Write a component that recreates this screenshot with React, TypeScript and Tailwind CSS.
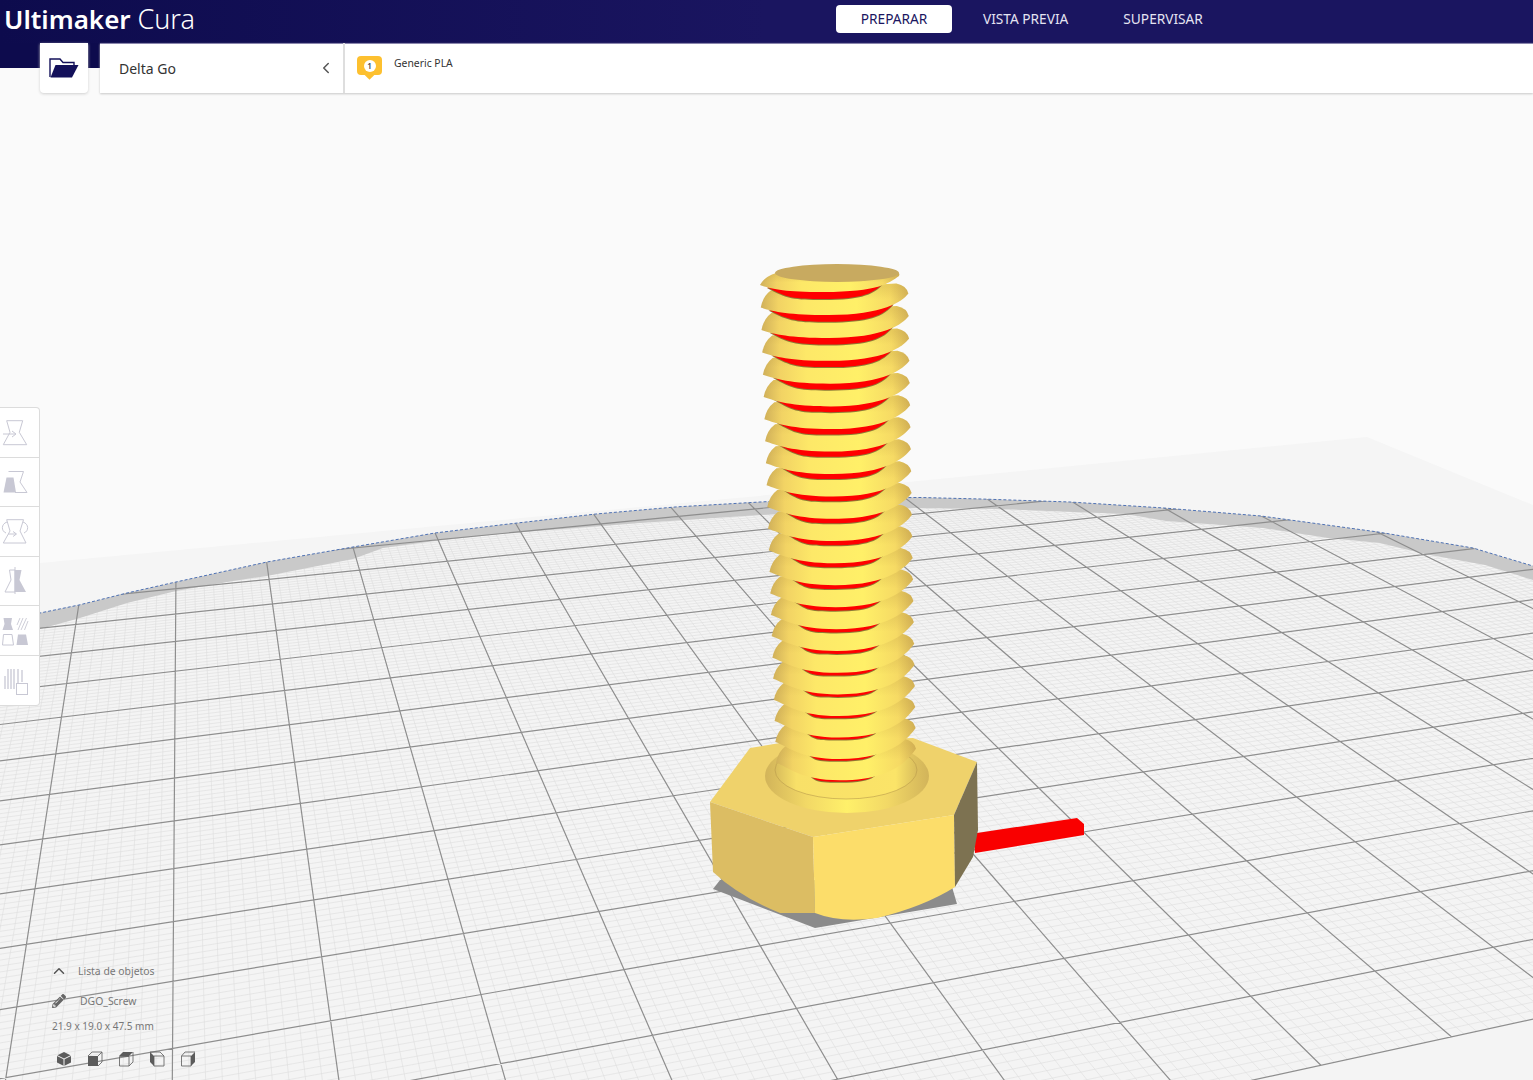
import { ChevronLeft, ChevronUp } from "lucide-react";
import { FaPencilAlt } from "react-icons/fa";

type Pt = [number, number];

// fits the build plate perspective from 4 grid crossings read off the screenshot
function fitPlate(src: Pt[], dst: Pt[]) {
  const a: number[][] = [];
  src.forEach(([u, v], i) => {
    const [x, y] = dst[i];
    a.push([u, v, 1, 0, 0, 0, -u * x, -v * x, x]);
    a.push([0, 0, 0, u, v, 1, -u * y, -v * y, y]);
  });
  for (let c = 0; c < 8; c++) {
    let p = c;
    for (let r = c + 1; r < 8; r++) if (Math.abs(a[r][c]) > Math.abs(a[p][c])) p = r;
    [a[c], a[p]] = [a[p], a[c]];
    for (let r = 0; r < 8; r++) {
      if (r === c) continue;
      const f = a[r][c] / a[c][c];
      for (let k = c; k < 9; k++) a[r][k] -= f * a[c][k];
    }
  }
  const h = a.map((row, i) => row[8] / row[i]);
  return (u: number, v: number): Pt => {
    const w = h[6] * u + h[7] * v + 1;
    return [(h[0] * u + h[1] * v + h[2]) / w, (h[3] * u + h[4] * v + h[5]) / w];
  };
}

const project = fitPlate(
  [[0, 0], [0, 5], [9, 0], [9, 4]],
  [[175.7, 614], [174.5, 778], [950.5, 532.7], [1073.6, 626.7]]
);

const seg = (u1: number, v1: number, u2: number, v2: number) => {
  const a = project(u1, v1);
  const b = project(u2, v2);
  return `M${a[0].toFixed(1)} ${a[1].toFixed(1)}L${b[0].toFixed(1)} ${b[1].toFixed(1)}`;
};

const U0 = -8, U1 = 24, V0 = -3, V1 = 13;
let minor = "";
let major = "";
for (let i = U0 * 10; i <= U1 * 10; i++) {
  if (i % 10 === 0) major += seg(i / 10, V0, i / 10, V1);
  else minor += seg(i / 10, V0, i / 10, V1);
}
for (let i = V0 * 10; i <= V1 * 10; i++) {
  if (i % 10 === 0) major += seg(U0, i / 10, U1, i / 10);
  else minor += seg(U0, i / 10, U1, i / 10);
}

const edge: Pt[] = [
  [0, 625], [40, 613], [79, 605], [127, 593], [176, 582], [267, 562], [353, 547], [435, 533],
  [500, 525], [596, 514], [675, 507], [760, 502], [840, 498], [920, 497.5], [981, 499],
  [1070, 502], [1164, 508], [1261, 516], [1378, 532], [1473, 548], [1533, 566],
];
const bandLower: Pt[] = [
  [1533, 580], [1485, 565], [1425, 554], [1380, 543], [1328, 538], [1263, 528], [1166, 521], [1126, 514],
  [997, 509], [908, 508], [760, 515], [640, 523], [500, 534], [435, 541], [383, 548], [353, 559],
  [267, 576], [233, 581], [176, 591], [127, 603], [80, 618], [40, 629], [0, 640],
];
const pts = (l: Pt[]) => l.map((p) => p.join(",")).join(" ");

const threads = Array.from({ length: 23 }, (_, i) => {
  const t = i / 22;
  const yl = 285 + 22.6 * i - 0.04 * i * i;
  const xl = 760 + 16 * t;
  const xr = i === 0 ? 899 : 908 + 8 * t;
  return {
    i, yl, xl, xr,
    xc: (xl + xr) / 2 - 6,
    sag: 7 + 10.5 * t,
    th: 7 - 5.5 * t,
    s: 7 + 15 * t,
    e: 14 + 15 * t,
  };
}).reverse();

function Screw() {
  return (
    <g>
      <polygon points="720,880 713,889 815,928 957,904 950,880" fill="#8b8b8b" />
      <polygon points="974,843 977,833 1077,818 1084,824 1084,835 975,853" fill="#f90000" />
      <polygon points="710,802 750,748 780,743 913,738 977,762 954,815 813,837" fill="#efd26b" />
      <path d="M710 802L813 837L815 913L780 913Q740 897 713 872Z" fill="#dcbd63" />
      <path d="M813 837L954 815L955 887Q923 907 877 918Q840 923 815 913Z" fill="#fcdd6a" />
      <path d="M954 815L977 762L978 830L973 857L955 887Z" fill="#7d7251" />
      <ellipse cx="847" cy="776" rx="82" ry="37" fill="url(#ring)" />
      <ellipse cx="846" cy="770" rx="71" ry="29" fill="url(#ring2)" stroke="#b89b4c" strokeWidth="0.6" />
      {threads.map(({ i, yl, xl, xr, xc, sag, th, s, e }) => {
        const low = yl + sag + th;
        const red =
          `M${xl + s} ${yl + 2}C${xl + s + 20} ${low - 1} ${xc - 30} ${low} ${xc} ${low}` +
          `C${xc + 40} ${low} ${xr - e - 10} ${yl + 2 + th * 0.5 + sag * 0.4} ${xr - e} ${yl - 4}L${xc} ${yl}Z`;
        const top =
          i === 0
            ? `M${xl} ${yl}Q${xl + 4} ${yl - 8} 776 273L898 273Q${xr + 1} ${yl - 12} ${xr} ${yl - 9}C${xr - 10} ${yl - 2}`
            : `M${xl} ${yl}Q${xl + 2} ${yl - 11} ${xl + 10} ${yl - 17}L${xr - 12} ${yl - 24}Q${xr - 2} ${yl - 22} ${xr} ${yl - 14}C${xr - 6} ${yl - 6}`;
        const lens = `${top} ${xc + 55} ${yl + sag} ${xc} ${yl + sag}C${xc - 40} ${yl + sag} ${xl + 12} ${yl + 4} ${xl} ${yl}Z`;
        return (
          <g key={i}>
            <path d={red} fill="#8f7a36" transform="translate(0 1)" />
            <path d={red} fill="#ff0000" />
            <path d={lens} fill="url(#thread)" />
            <path d={lens} fill="url(#threadShade)" />
          </g>
        );
      })}
      <ellipse cx="837" cy="273" rx="62" ry="9" fill="#c8aa60" />
    </g>
  );
}

function Viewport() {
  return (
    <svg className="absolute inset-0" width="1533" height="1080" viewBox="0 0 1533 1080">
      <defs>
        <linearGradient id="thread" x1="0" x2="1" y1="0" y2="0">
          <stop offset="0" stopColor="#d0b05a" />
          <stop offset="0.12" stopColor="#f2d364" />
          <stop offset="0.3" stopColor="#fde868" />
          <stop offset="0.65" stopColor="#fff068" />
          <stop offset="0.88" stopColor="#f6da64" />
          <stop offset="1" stopColor="#d6b458" />
        </linearGradient>
        <linearGradient id="threadShade" x1="0" x2="0" y1="0" y2="1">
          <stop offset="0.1" stopColor="#b08c3c" stopOpacity="0.2" />
          <stop offset="0.5" stopColor="#b08c3c" stopOpacity="0" />
        </linearGradient>
        <linearGradient id="ring" x1="0" x2="1" y1="0" y2="0">
          <stop offset="0" stopColor="#d2b45a" />
          <stop offset="0.25" stopColor="#f2d866" />
          <stop offset="0.5" stopColor="#fff06a" />
          <stop offset="0.75" stopColor="#f2d866" />
          <stop offset="1" stopColor="#d2b45a" />
        </linearGradient>
        <linearGradient id="ring2" x1="0" x2="1" y1="0" y2="0">
          <stop offset="0" stopColor="#d8bc5c" />
          <stop offset="0.15" stopColor="#f8e068" />
          <stop offset="0.85" stopColor="#fbe468" />
          <stop offset="1" stopColor="#d8bc5c" />
        </linearGradient>
        <clipPath id="bed">
          <polygon points={`${pts(edge)} 1533,1080 0,1080`} />
        </clipPath>
      </defs>
      <polygon points="40,563 908,482 1367,437 1533,505 1533,600 0,640 0,567" fill="#f5f5f5" />
      <polygon points={`${pts(edge)} 1533,1080 0,1080`} fill="#f4f4f4" />
      <path d={minor} clipPath="url(#bed)" fill="none" stroke="#dedede" strokeWidth="0.6" />
      <polygon points={`${pts(edge)} ${pts(bandLower)}`} fill="#c9c9c9" />
      <path d={major} clipPath="url(#bed)" fill="none" stroke="#8e8e8e" strokeWidth="1.2" />
      <polyline points={pts(edge)} fill="none" stroke="#4f72b4" strokeWidth="1" strokeDasharray="3 2" />
      <Screw />
    </svg>
  );
}

const ink = "#c8c8d4";
const tools = [
  <>
    <path d="M6.7 12.7H22.7L19.3 24.3L26.7 36.7H3.3L10 24.3Z" fill="none" stroke={ink} />
    <path d="M3 26H15M12 23L16 26L12 29" fill="none" stroke={ink} />
  </>,
  <>
    <path d="M8.500 14.500H23.500L20 25L27 35.500H15" fill="none" stroke={ink} />
    <path d="M6.500 20.500H13.500L16 35.500H3.500Z" fill={ink} />
  </>,
  <>
    <path d="M6.700 12.700H23.500L20 24L26 36H3.300L10 24Z" fill="none" stroke={ink} />
    <path d="M7 15C1 17 1 24 6 26M23 15C29 17 29 24 24 26" fill="none" stroke={ink} />
    <path d="M8 27H16M13 24.500L16.500 27L13 29.500" fill="none" stroke={ink} />
  </>,
  <>
    <path d="M15 14H9.500L11 24L5 36H15Z" fill="none" stroke={ink} />
    <path d="M15 14H21.500L19.500 24L26 36H15Z" fill={ink} />
    <path d="M15 11V38" stroke={ink} />
  </>,
  <>
    <path d="M3.500 12H12L11 18L13 24H2.500L4.500 18Z" fill={ink} />
    <path d="M18 24L23 12M21 24L26.500 12M24.500 24L28 15M17 19L20 12" stroke={ink} fill="none" strokeWidth="0.9" />
    <path d="M3.500 28.500H12L13.500 39H2.500Z" fill="none" stroke={ink} />
    <path d="M18 28.500H26L28 39H16.500Z" fill={ink} />
  </>,
  <>
    <path d="M5 33V20M8 33V13M11 33V13M14 33V13M18 28V13M22 26V14" stroke={ink} strokeWidth="1.300" fill="none" />
    <rect x="16.500" y="27.500" width="11" height="11" fill="#fff" stroke={ink} />
  </>,
];

const cubeStroke = "#5c5c5c";
function Cube({ kind }: { kind: number }) {
  return (
    <svg width="16" height="16" viewBox="0 0 16 16" className="shrink-0">
      {kind === 0 && (
        <>
          <path d="M8 1L15 4.500V11.500L8 15L1 11.500V4.500Z" fill={cubeStroke} />
          <path d="M1 4.500L8 8L15 4.500M8 8V15" stroke="#f4f4f4" fill="none" />
        </>
      )}
      {kind === 1 && (
        <>
          <path d="M1 5L5 1H15V11L11 15M11 5L15 1" stroke={cubeStroke} strokeWidth="0.8" fill="none" />
          <rect x="1" y="5" width="10" height="10" fill={cubeStroke} />
        </>
      )}
      {kind === 2 && (
        <>
          <path d="M1 5L5 1H15L11 5Z" fill={cubeStroke} />
          <path d="M1.500 5.500H11V15H1.500ZM11 15L15 11V1" stroke={cubeStroke} strokeWidth="0.8" fill="none" />
        </>
      )}
      {kind === 3 && (
        <>
          <path d="M1 1L5 5V15L1 11Z" fill={cubeStroke} />
          <path d="M1 1H11L15 5V15H5V5H15" stroke={cubeStroke} strokeWidth="0.8" fill="none" />
        </>
      )}
      {kind === 4 && (
        <>
          <path d="M11 5L15 1V11L11 15Z" fill={cubeStroke} />
          <path d="M1.500 5H11V15H1.500ZM1.500 5L5 1H15" stroke={cubeStroke} strokeWidth="0.8" fill="none" />
        </>
      )}
    </svg>
  );
}

export default function App() {
  return (
    <div className="relative w-[1533px] h-[1080px] overflow-hidden bg-[#fafafa] font-['Noto_Sans',sans-serif]">
      <Viewport />

      <div className="relative h-[68px] bg-[#0d0b4d]">
        <header className="flex h-[43px] items-start bg-[linear-gradient(to_right,#0d0b4d,#1a1560_50%,#1a1560)] pl-1 pt-[5px]">
          <div className="w-[832px] text-[26px] leading-none text-white">
            <span className="font-semibold">Ultimaker</span> <span className="text-[27px] font-light">Cura</span>
          </div>
          <nav className="flex gap-[7px] text-[13.7px]">
            <a className="flex h-7 w-[116px] items-center justify-center rounded-sm bg-white text-[#1a1560]">PREPARAR</a>
            <a className="flex h-7 items-center px-6 text-[#e4e4f2]">VISTA PREVIA</a>
            <a className="flex h-7 items-center px-6 text-[#e4e4f2]">SUPERVISAR</a>
          </nav>
        </header>

        <div className="flex h-[50px] gap-3 pl-10">
          <button className="flex w-12 items-center justify-center rounded-b-sm bg-white shadow-[0_1px_3px_#d0d0d0]">
            <svg width="30" height="22" viewBox="0 0 30 22">
              <path d="M1 20V2H11L14 5.500H25V8" fill="none" stroke="#13105a" strokeWidth="1.400" />
              <path d="M6.500 8H29.500L23 20.500H1.500Z" fill="#13105a" />
            </svg>
          </button>
          <div className="flex flex-1 bg-white shadow-[0_1px_2px_#c8c8c8,inset_0_1px_0_#8a86ad]">
            <div className="flex w-[245px] items-center justify-between border-r-2 border-[#dedede] pl-[19px] pr-[8px] text-[14px] text-[#333]">
              <span>Delta Go</span>
              <ChevronLeft size={18} strokeWidth={2} color="#555" />
            </div>
            <div className="flex gap-3 pl-[12px] pt-[13px] text-[10.4px] leading-none text-[#333]">
              <div className="relative flex h-[19px] w-[25px] items-center justify-center rounded-sm bg-[#fdc02f]">
                <span className="relative z-10 flex size-3 items-center justify-center rounded-full bg-white text-[8px] font-semibold text-[#444]">1</span>
                <span className="absolute left-2 top-[13px] size-[9px] rotate-45 bg-[#fdc02f]" />
              </div>
              <span className="pt-[2px]">Generic PLA</span>
            </div>
          </div>
        </div>
      </div>

      <aside className="absolute left-0 top-[407px] flex w-10 flex-col divide-y divide-[#dcdcdc] rounded-r-sm border border-l-0 border-[#dcdcdc] bg-white">
        {tools.map((t, i) => (
          <button key={i} className="flex h-[49.500px] items-center">
            <svg width="30" height="49" viewBox="0 0 30 49">{t}</svg>
          </button>
        ))}
      </aside>

      <div className="absolute left-[52px] top-[962px] text-[10.4px] leading-none text-[#777]">
        <div className="flex items-center gap-[10px]">
          <ChevronUp size={18} strokeWidth={2} color="#555" className="-ml-[2px]" />
          <span>Lista de objetos</span>
        </div>
        <div className="mt-[14px] flex items-center gap-[14px]">
          <FaPencilAlt size={14} color="#666" />
          <span>DGO_Screw</span>
        </div>
        <div className="mt-[13px] text-[10px]">21.9 x 19.0 x 47.5 mm</div>
        <div className="mt-[20px] flex gap-[15px] pl-[4px]">
          {[0, 1, 2, 3, 4].map((k) => (
            <Cube key={k} kind={k} />
          ))}
        </div>
      </div>
    </div>
  );
}
